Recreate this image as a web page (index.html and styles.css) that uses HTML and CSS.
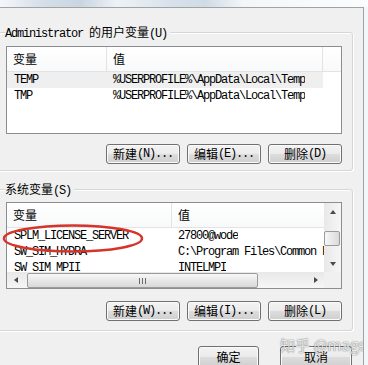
FILE: index.html
```html
<!doctype html>
<html lang="zh-CN">
<head>
    <meta charset="UTF-8">
    <meta name="viewport" content="width=device-width, initial-scale=1.0">
    <title>环境变量</title>
    <link rel="stylesheet" href="styles.css">
</head>
<body>
    <div class="top-blur"></div>
    <div class="dialog">
        <div class="group group-user">
            <div class="caption">Administrator <span class="zh">的用户变量</span>(U)</div>
            <div class="listbox">
                <div class="list-head">
                    <div class="col user-name"><span class="zh">变量</span></div>
                    <div class="col user-value"><span class="zh">值</span></div>
                    <div class="col col-fill"></div>
                </div>
                <div class="row user-row active">
                    <div class="cell user-name">TEMP</div>
                    <div class="cell">%USERPROFILE%\AppData\Local\Temp</div>
                </div>
                <div class="row user-row">
                    <div class="cell user-name">TMP</div>
                    <div class="cell">%USERPROFILE%\AppData\Local\Temp</div>
                </div>
            </div>
            <div class="buttons">
                <div class="btn"><span class="zh">新建</span>(N)...</div>
                <div class="btn"><span class="zh">编辑</span>(E)...</div>
                <div class="btn"><span class="zh">删除</span>(D)</div>
            </div>
        </div>

        <div class="group group-system">
            <div class="caption"><span class="zh">系统变量</span>(S)</div>
            <div class="listbox system">
                <div class="list-body">
                    <div class="list-head">
                        <div class="col sys-name"><span class="zh">变量</span></div>
                        <div class="col col-fill"><span class="zh">值</span></div>
                    </div>
                    <div class="row">
                        <div class="cell sys-name">SPLM_LICENSE_SERVER</div>
                        <div class="cell">27800@wode</div>
                    </div>
                    <div class="row">
                        <div class="cell sys-name">SW_SIM_HYDRA</div>
                        <div class="cell">C:\Program Files\Common Files\</div>
                    </div>
                    <div class="row">
                        <div class="cell sys-name">SW_SIM_MPII</div>
                        <div class="cell">INTELMPI</div>
                    </div>
                </div>
                <div class="vscroll">
                    <div class="sb-btn"><i class="tri tri-up"></i></div>
                    <div class="vtrack"><div class="vthumb"></div></div>
                    <div class="sb-btn"><i class="tri tri-down"></i></div>
                </div>
                <div class="hscroll">
                    <div class="sb-btn"><i class="tri tri-left"></i></div>
                    <div class="htrack"><div class="hthumb"><span class="grip"></span></div></div>
                    <div class="sb-btn"><i class="tri tri-right"></i></div>
                </div>
                <div class="corner"></div>
            </div>
            <div class="buttons">
                <div class="btn"><span class="zh">新建</span>(W)...</div>
                <div class="btn"><span class="zh">编辑</span>(I)...</div>
                <div class="btn"><span class="zh">删除</span>(L)</div>
            </div>
        </div>

        <div class="footer">
            <div class="btn btn-ok"><span class="zh">确定</span></div>
            <div class="btn btn-cancel"><span class="zh">取消</span></div>
        </div>

        <svg class="mark" width="150" height="40" viewBox="0 0 150 40">
            <ellipse cx="73" cy="22.5" rx="69" ry="13" fill="none" stroke="#d6332b" stroke-width="2.5"/>
        </svg>
        <div class="watermark"><span class="zh">知乎</span> @mage</div>
    </div>
</body>
</html>
```

FILE: styles.css
```css
* {
    box-sizing: border-box;
}
body {
    margin: 0;
    width: 368px;
    height: 365px;
    overflow: hidden;
    background: #f2f6f9;
    color: #000;
    font-family: "Liberation Mono", "Noto Sans CJK SC", monospace;
    font-size: 12px;
    letter-spacing: -1.2px;
}
.zh {
    font-family: "Noto Sans CJK SC", sans-serif;
    letter-spacing: 0;
}
.top-blur {
    height: 7px;
    background: linear-gradient(90deg, #f4f7f9 0%, #d3dee8 12%, #c9d6e2 22%, #eef2f5 32%, #d6e0ea 48%, #cfdbe6 56%, #f3f6f8 66%, #fbfcfd 100%);
}
.dialog {
    position: relative;
    width: 364px;
    height: 358px;
    background: #f0f0f0;
    border-top: 1px solid #a2a2a2;
    border-right: 1px solid #a2a2a2;
    overflow: hidden;
}
.group {
    width: 356px;
    margin: 24px 0 0 -3px;
    padding: 0 10px 6px 8px;
    border: 1px solid #d6d6d6;
    border-radius: 3px;
    box-shadow: inset 1px 1px 0 #fff, 1px 1px 0 #fff;
}
.group-system {
    margin-top: 18px;
    padding-bottom: 9px;
}
.caption {
    width: max-content;
    height: 14px;
    margin: -8px 0 0 -1px;
    padding-right: 3px;
    line-height: 14px;
    background: #f0f0f0;
}
.listbox {
    height: 88px;
    margin-top: 7px;
    border: 1px solid #8a8d94;
    background: #fff;
    overflow: hidden;
}
.listbox.system {
    height: 87px;
    margin-top: 6px;
    display: grid;
    grid-template-columns: 317px 17px;
    grid-template-rows: 69px 16px;
}
.list-body {
    overflow: hidden;
}
.list-head {
    display: flex;
    height: 25px;
    border-bottom: 1px solid #e3e3e3;
    background: linear-gradient(#fff, #f8f9fa);
}
.col {
    padding-left: 6px;
    line-height: 24px;
    border-right: 1px solid #e3e3e3;
}
.col.col-fill {
    flex: 1;
    border-right: none;
}
.user-name {
    width: 100px;
    flex: none;
}
.user-value {
    width: 216px;
}
.sys-name {
    width: 165px;
    flex: none;
}
.row {
    display: flex;
    height: 16px;
    line-height: 16px;
    white-space: nowrap;
}
.user-row {
    width: 316px;
}
.row.active {
    background: #efefef;
}
.cell {
    padding-left: 6px;
    overflow: hidden;
}
.cell.user-name,
.cell.sys-name {
    padding-left: 7px;
}
.vscroll {
    display: flex;
    flex-direction: column;
    background: linear-gradient(90deg, #e8e8e8, #f6f6f6);
}
.hscroll {
    display: flex;
    background: linear-gradient(#e8e8e8, #f6f6f6);
}
.corner {
    background: #f0f0f0;
}
.sb-btn {
    display: flex;
    align-items: center;
    justify-content: center;
    width: 17px;
    height: 17px;
    flex: none;
}
.hscroll .sb-btn {
    height: 16px;
}
.vtrack {
    flex: 1;
    padding-top: 11px;
}
.vthumb {
    width: 16px;
    height: 15px;
    border: 1px solid #9b9b9b;
    border-radius: 2px;
    background: linear-gradient(90deg, #f7f7f7, #dadada);
}
.htrack {
    flex: 1;
    padding: 1px 0 0 3px;
}
.hthumb {
    display: flex;
    align-items: center;
    justify-content: center;
    width: 231px;
    height: 15px;
    border: 1px solid #9b9b9b;
    border-radius: 2px;
    background: linear-gradient(#f7f7f7, #d8d8d8);
}
.grip {
    width: 7px;
    height: 6px;
    background: repeating-linear-gradient(90deg, #6a6a6a 0 1px, transparent 1px 3px);
}
.tri {
    width: 0;
    height: 0;
    border: 3px solid transparent;
}
.tri-up {
    border-top: 0;
    border-bottom: 4px solid #4a4a4a;
}
.tri-down {
    border-bottom: 0;
    border-top: 4px solid #4a4a4a;
}
.tri-left {
    border-left: 0;
    border-right: 4px solid #4a4a4a;
}
.tri-right {
    border-right: 0;
    border-left: 4px solid #4a4a4a;
}
.buttons {
    display: flex;
    justify-content: flex-end;
    gap: 7px;
    margin-top: 10px;
}
.group-system .buttons {
    margin-top: 12px;
}
.btn {
    display: flex;
    align-items: center;
    justify-content: center;
    width: 74px;
    height: 20px;
    line-height: 18px;
    border: 1px solid #707070;
    border-radius: 3px;
    background: linear-gradient(#f3f3f3 0%, #ebebeb 50%, #dddddd 50%, #cfcfcf 100%);
    box-shadow: inset 0 0 0 1px #fbfbfb;
    white-space: nowrap;
}
.footer {
    display: flex;
    justify-content: flex-end;
    gap: 21px;
    margin-top: 15px;
    padding-right: 11px;
}
.btn-ok {
    width: 61px;
    height: 22px;
}
.btn-cancel {
    width: 72px;
    height: 22px;
}
.mark {
    position: absolute;
    left: 0;
    top: 208px;
}
.watermark {
    position: absolute;
    left: 280px;
    top: 328px;
    white-space: nowrap;
    font-family: "Noto Sans CJK SC", sans-serif;
    font-size: 15px;
    line-height: 18px;
    letter-spacing: 0;
    color: rgba(255, 255, 255, 0.85);
    text-shadow: 0 0 1px rgba(0, 0, 0, 0.55), 0 0 2px rgba(0, 0, 0, 0.25);
}
```
